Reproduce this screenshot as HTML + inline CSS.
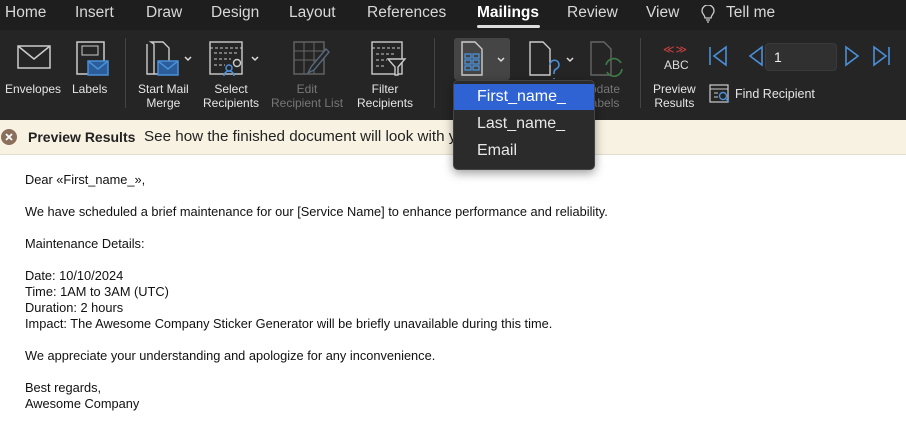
<!DOCTYPE html>
<html><head><meta charset="utf-8"><style>
body{margin:0;width:906px;height:439px;overflow:hidden;background:#fff;font-family:"Liberation Sans",Arial,sans-serif;position:relative}
.tabs{position:absolute;left:0;top:0;width:906px;height:30px;background:#1e1e1e}
.tab{position:absolute;top:4px;color:#d8d8d8;font-size:15.5px}
.rib{position:absolute;left:0;top:30px;width:906px;height:90px;background:#252525}
.lbl{position:absolute;color:#e6e6e6;font-size:12px;text-align:center;line-height:14px;white-space:nowrap}
.dis{color:#777}
.sep{position:absolute;top:8px;width:1px;height:70px;background:#444}
svg{position:absolute}
.bar{position:absolute;left:0;top:120px;width:906px;height:34px;background:#f8f2e2;border-bottom:1px solid #e2dccb}
.doc{position:absolute;left:25px;top:172px;font-size:12.8px;line-height:16px;color:#111}
.menu{position:absolute;left:453px;top:80px;width:140px;height:88px;background:#2b2b2b;border:1px solid #444;border-radius:5px;box-shadow:0 3px 10px rgba(0,0,0,.4)}
.mi{position:absolute;left:23px;color:#e8e8e8;font-size:16px}
</style></head><body>
<div class="tabs">
<span class="tab" style="left:5px">Home</span>
<span class="tab" style="left:75px">Insert</span>
<span class="tab" style="left:146px">Draw</span>
<span class="tab" style="left:211px">Design</span>
<span class="tab" style="left:289px">Layout</span>
<span class="tab" style="left:367px">References</span>
<span class="tab" style="left:477px;color:#fff;font-weight:bold">Mailings</span>
<div style="position:absolute;left:477px;top:25px;width:63px;height:3px;background:#ddd;border-radius:2px"></div>
<span class="tab" style="left:567px">Review</span>
<span class="tab" style="left:646px">View</span>
<svg style="left:701px;top:5px" width="14" height="18" viewBox="0 0 14 18"><path d="M4 13 C4 10 1 9 1 6 A6 6 0 0 1 13 6 C13 9 10 10 10 13 Z M5 15 H9 M6 17 H8" fill="none" stroke="#ccc" stroke-width="1.3"/></svg>
<span class="tab" style="left:726px">Tell me</span>
</div>
<div class="rib">
<svg style="left:17px;top:15px" width="34" height="24"><rect x="1" y="1" width="32" height="22" fill="none" stroke="#ccc" stroke-width="1.5"/><path d="M1 1 L17 14 L33 1" fill="none" stroke="#ccc" stroke-width="1.5"/></svg>
<svg style="left:76px;top:11px" width="34" height="36"><rect x="1" y="1" width="27" height="32" fill="none" stroke="#ccc" stroke-width="1.5"/><rect x="6" y="5" width="16" height="9" fill="none" stroke="#ccc"/><rect x="12" y="20" width="20" height="14" fill="#2a5d9a" stroke="#4a90d9" stroke-width="1.5"/><path d="M12 20 L22 28 L32 20" fill="none" stroke="#4a90d9" stroke-width="1.5"/></svg>
<div class="lbl" style="left:5px;top:52px">Envelopes</div>
<div class="lbl" style="left:72px;top:52px">Labels</div>
<div class="sep" style="left:125px"></div>
<svg style="left:146px;top:11px" width="48" height="36"><path d="M1 3 V33 H8 M5 1 H17 L23 7 V33 H8 V3 Z" fill="none" stroke="#ccc" stroke-width="1.4"/><rect x="12" y="20" width="20" height="14" fill="#2a5d9a" stroke="#4a90d9" stroke-width="1.5"/><path d="M12 20 L22 28 L32 20" fill="none" stroke="#4a90d9" stroke-width="1.5"/><path d="M39 16 l3 3 l3 -3" fill="none" stroke="#ddd" stroke-width="1.5"/></svg>
<div class="lbl" style="left:138px;top:52px">Start Mail<br>Merge</div>
<svg style="left:209px;top:11px" width="50" height="36"><rect x="1" y="1" width="32" height="32" fill="none" stroke="#ccc" stroke-width="1.4"/><path d="M1 7 H33 M5 12 H28 M5 18 H22 M5 24 H16" stroke="#ccc" stroke-dasharray="3 2"/><circle cx="20" cy="27" r="3" fill="none" stroke="#4a90d9" stroke-width="1.5"/><path d="M15 35 A5 5 0 0 1 25 35" fill="none" stroke="#4a90d9" stroke-width="1.5"/><circle cx="28" cy="22" r="3.5" fill="none" stroke="#ccc" stroke-width="1.4"/><path d="M43 16 l3 3 l3 -3" fill="none" stroke="#ddd" stroke-width="1.5"/></svg>
<div class="lbl" style="left:203px;top:52px">Select<br>Recipients</div>
<svg style="left:293px;top:11px" width="38" height="36"><rect x="1" y="1" width="30" height="32" fill="none" stroke="#666" stroke-width="1.4"/><path d="M1 10 H31 M1 19 H31 M11 1 V33 M21 1 V33" stroke="#666"/><path d="M33 8 L18 26 L15 32 L21 29 L36 11 Z" fill="#252525" stroke="#567" stroke-width="1.5"/></svg>
<div class="lbl dis" style="left:271px;top:52px">Edit<br>Recipient List</div>
<svg style="left:371px;top:11px" width="36" height="36"><rect x="1" y="1" width="30" height="32" fill="none" stroke="#ccc" stroke-width="1.4"/><path d="M1 7 H31 M5 13 H25 M5 19 H16 M5 25 H14" stroke="#ccc" stroke-dasharray="3 2"/><path d="M17 18 H34 L27 26 V34 H24 V26 Z" fill="#252525" stroke="#ccc" stroke-width="1.4"/></svg>
<div class="lbl" style="left:357px;top:52px">Filter<br>Recipients</div>
<div class="sep" style="left:434px"></div>
<div style="position:absolute;left:454px;top:8px;width:56px;height:42px;background:#454545;border-radius:3px"></div>
<svg style="left:461px;top:11px" width="46" height="36"><path d="M1 1 H14 L21 8 V34 H1 Z" fill="none" stroke="#ccc" stroke-width="1.4"/><g fill="none" stroke="#4a90d9" stroke-width="1.3"><rect x="4" y="13" width="6" height="4"/><rect x="12" y="13" width="6" height="4"/><rect x="4" y="19" width="6" height="4"/><rect x="12" y="19" width="6" height="4"/><rect x="4" y="25" width="6" height="4"/><rect x="12" y="25" width="6" height="4"/></g><path d="M37 17 l3 3 l3 -3" fill="none" stroke="#ddd" stroke-width="1.5"/></svg>
<svg style="left:529px;top:11px" width="48" height="40"><path d="M1 1 H14 L21 8 V34 H1 Z" fill="none" stroke="#ccc" stroke-width="1.4"/><path d="M21 24 A4.5 4.5 0 1 1 27 28 C25 29 25 31 25 33 M25 37 V38" fill="none" stroke="#4a90d9" stroke-width="1.6"/><path d="M38 17 l3 3 l3 -3" fill="none" stroke="#ddd" stroke-width="1.5"/></svg>
<svg style="left:590px;top:11px" width="36" height="36"><path d="M1 1 H14 L21 8 V34 H1 Z" fill="none" stroke="#666" stroke-width="1.4"/><path d="M16 24 A8 8 0 0 1 31 22 M32 28 A8 8 0 0 1 17 31" fill="none" stroke="#3f7a45" stroke-width="1.6"/></svg>
<div class="lbl dis" style="left:590px;top:52px">pdate<br>abels</div>
<div class="sep" style="left:640px"></div>
<div style="position:absolute;left:663px;top:13px;color:#d04040;font-size:11px;letter-spacing:1px">≪≫</div>
<div style="position:absolute;left:664px;top:28px;color:#ddd;font-size:12px">ABC</div>
<div class="lbl" style="left:653px;top:52px">Preview<br>Results</div>
<svg style="left:708px;top:15px" width="200" height="22"><g fill="none" stroke="#4a90d9" stroke-width="1.6"><path d="M2 2 V20 M18 2 L6 11 L18 20 Z"/><path d="M54 2 L42 11 L54 20 Z"/><path d="M138 2 L150 11 L138 20 Z"/><path d="M166 2 L178 11 L166 20 Z M181 2 V20"/></g></svg>
<div style="position:absolute;left:765px;top:13px;width:70px;height:26px;background:#303030;border:1px solid #3a3a3a;border-radius:4px;color:#eee;font-size:14px;line-height:26px;text-indent:8px">1</div>
<svg style="left:709px;top:54px" width="22" height="20"><rect x="1" y="1" width="18" height="17" fill="none" stroke="#ccc" stroke-width="1.2"/><path d="M1 5 H19 M5 9 H9 M5 13 H9" stroke="#ccc"/><circle cx="14" cy="12" r="3.5" fill="none" stroke="#4a90d9" stroke-width="1.4"/><path d="M16.5 14.5 L20 18" stroke="#4a90d9" stroke-width="1.5"/></svg>
<div class="lbl" style="left:735px;top:57px;font-size:12.5px">Find Recipient</div>
</div>
<div class="bar">
<svg style="left:1px;top:9px" width="16" height="16"><circle cx="8" cy="8" r="8" fill="#8a6f5a"/><path d="M5 5 L11 11 M11 5 L5 11" stroke="#fff" stroke-width="1.8"/></svg>
<span style="position:absolute;left:28px;top:9px;font-size:14px;font-weight:bold;color:#222">Preview Results</span>
<span style="position:absolute;left:144px;top:8px;font-size:15.2px;color:#222">See how the finished document will look with y</span>
</div>
<div class="menu">
<div style="position:absolute;left:0;top:3px;width:140px;height:26px;background:#2f63d4"></div>
<div class="mi" style="top:7px;color:#fff">First_name_</div>
<div class="mi" style="top:34px">Last_name_</div>
<div class="mi" style="top:61px">Email</div>
</div>
<div class="doc">
Dear «First_name_»,<br><br>
We have scheduled a brief maintenance for our [Service Name] to enhance performance and reliability.<br><br>
Maintenance Details:<br><br>
Date: 10/10/2024<br>
Time: 1AM to 3AM (UTC)<br>
Duration: 2 hours<br>
Impact: The Awesome Company Sticker Generator will be briefly unavailable during this time.<br><br>
We appreciate your understanding and apologize for any inconvenience.<br><br>
Best regards,<br>
Awesome Company
</div>
</body></html>
